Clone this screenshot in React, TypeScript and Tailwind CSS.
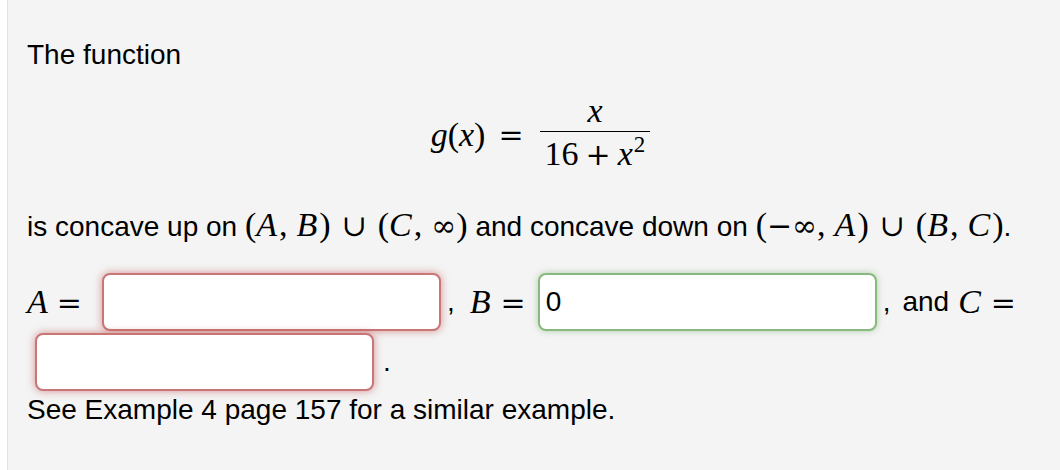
const sans = "font-['Liberation_Sans',Arial,sans-serif]"
const serif = "font-['Liberation_Serif','Times_New_Roman',serif]"

function M({ children, className = '' }: { children: React.ReactNode; className?: string }) {
  return <span className={`${serif} text-[34px] leading-[34px] whitespace-nowrap ${className}`}>{children}</span>
}

function Op({ children, className = '' }: { children: React.ReactNode; className?: string }) {
  return <span className={`font-['DejaVu_Serif',serif] text-[30px] ${className}`}>{children}</span>
}

// italic variable with a little extra room, like TeX's math italic
function V({ children }: { children: React.ReactNode }) {
  return <i className="mr-[2px]">{children}</i>
}

function Sp() {
  return <span className="inline-block w-[9px]" />
}

function Answer({ value = '', ok = false, className = '' }: { value?: string; ok?: boolean; className?: string }) {
  return (
    <input
      readOnly
      value={value}
      className={`w-[339px] h-[58px] shrink-0 rounded-[8px] bg-white px-[6px] text-[28px] text-black outline-none ${sans} ${
        ok
          ? 'border-2 border-[#88b97e] shadow-[0_0_6px_rgba(110,170,95,0.5)]'
          : 'border-2 border-[#c97676] shadow-[0_0_8px_rgba(190,80,80,0.6)]'
      } ${className}`}
    />
  )
}

export default function App() {
  return (
    <div className={`w-[1060px] h-[470px] bg-white flex text-black ${sans}`}>
      <div className="ml-[7px] flex-1 border-l border-[#e3e3e3] bg-[#f4f4f4] pl-[19px] pt-[38px] text-[28px]">
        <p className="leading-[34px]">The function</p>

        <div className="mt-[23px] flex items-center justify-center pr-[6px]">
          <M>
            <i>g</i>(<i>x</i>)
          </M>
          <Op className="ml-[13px] mr-[16px]">=</Op>
          <span className={`inline-flex flex-col items-stretch ${serif} text-[34px]`}>
            <span className="leading-[32px] pb-[4px] text-center">
              <i>x</i>
            </span>
            <span className="h-px bg-black" />
            <span className="leading-[32px] pt-[6px] px-[5px] text-center whitespace-nowrap">
              16<Op className="mx-[7px]">+</Op>
              <i>x</i>
              <span className="relative -top-[13px] ml-[1px] text-[23px]">2</span>
            </span>
          </span>
        </div>

        <p className="mt-[34px] leading-[34px] whitespace-nowrap">
          is concave up on{' '}
          <M>
            (<V>A</V>,<Sp />
            <V>B</V>)<Op className="mx-[11px]">∪</Op>(<V>C</V>,<Sp />
            <Op>∞</Op>)
          </M>{' '}
          and concave down on{' '}
          <M>
            (<Op>−∞</Op>,<Sp />
            <V>A</V>)<Op className="mx-[11px]">∪</Op>(<V>B</V>,<Sp />
            <V>C</V>)
          </M>
          .
        </p>

        <div className="mt-[29px] flex items-center">
          <M>
            <V>A</V>
          </M>
          <Op className="ml-[7px]">=</Op>
          <Answer className="ml-[20px]" />
          <span className="ml-[6px] leading-[34px]">,</span>
          <M className="ml-[15px]">
            <V>B</V>
          </M>
          <Op className="ml-[8px]">=</Op>
          <Answer className="ml-[12px]" value="0" ok />
          <span className="ml-[6px] leading-[34px]">,</span>
          <span className="ml-[12px] leading-[34px]">and</span>
          <M className="ml-[9px]">
            <V>C</V>
          </M>
          <Op className="ml-[8px]">=</Op>
        </div>

        <div className="mt-[2px] flex items-center">
          <Answer className="ml-[8px]" />
          <span className="ml-[9px] leading-[34px]">.</span>
        </div>

        <p className="mt-[2px] leading-[34px]">See Example 4 page 157 for a similar example.</p>
      </div>
    </div>
  )
}
